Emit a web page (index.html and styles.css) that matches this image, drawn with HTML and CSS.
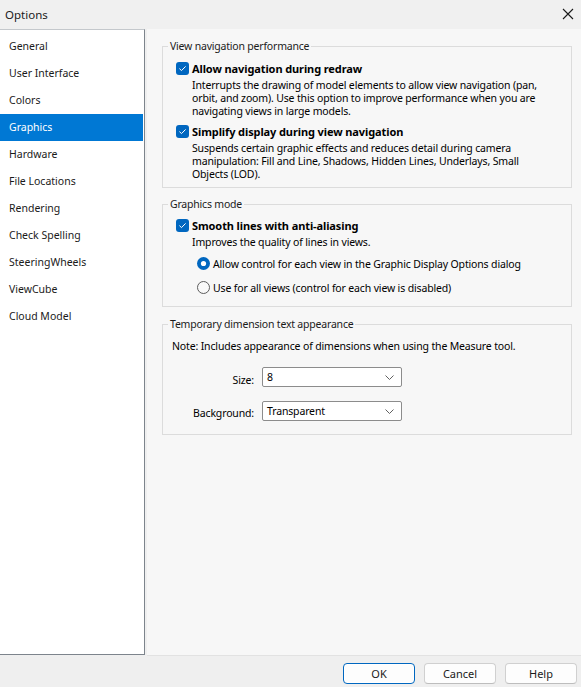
FILE: index.html
```html
<!DOCTYPE html>
<html>
<head>
<meta charset="utf-8">
<link rel="stylesheet" href="styles.css">
</head>
<body>
<div class="window">
  <div class="titlebar">
    <span class="title">Options</span>
    <svg class="close" width="12" height="12" viewBox="0 0 12 12"><path d="M1 1 L11 11 M11 1 L1 11" stroke="#1a1a1a" stroke-width="1.1" fill="none"/></svg>
  </div>
  <div class="main">
    <ul class="nav">
      <li>General</li>
      <li>User Interface</li>
      <li>Colors</li>
      <li class="active">Graphics</li>
      <li>Hardware</li>
      <li>File Locations</li>
      <li>Rendering</li>
      <li>Check Spelling</li>
      <li>SteeringWheels</li>
      <li>ViewCube</li>
      <li>Cloud Model</li>
    </ul>
    <div class="panel">
      <fieldset class="group g1">
        <legend>View navigation performance</legend>
        <div class="opts">
          <div class="check-row first">
            <svg class="cb" width="13" height="13" viewBox="0 0 13 13"><rect x="0" y="0" width="13" height="13" rx="3" fill="#0067c0"/><path d="M3.4 6.6 L5.5 8.6 L9.6 4.4" stroke="#fff" stroke-width="1" fill="none"/></svg>
            <span class="lbl">Allow navigation during redraw</span>
          </div>
          <p class="desc">Interrupts the drawing of model elements to allow view navigation (pan,<br>orbit, and zoom). Use this option to improve performance when you are<br>navigating views in large models.</p>
          <div class="check-row second">
            <svg class="cb" width="13" height="13" viewBox="0 0 13 13"><rect x="0" y="0" width="13" height="13" rx="3" fill="#0067c0"/><path d="M3.4 6.6 L5.5 8.6 L9.6 4.4" stroke="#fff" stroke-width="1" fill="none"/></svg>
            <span class="lbl">Simplify display during view navigation</span>
          </div>
          <p class="desc">Suspends certain graphic effects and reduces detail during camera<br>manipulation: Fill and Line, Shadows, Hidden Lines, Underlays, Small<br>Objects (LOD).</p>
        </div>
      </fieldset>

      <fieldset class="group g2">
        <legend>Graphics mode</legend>
        <div class="opts">
          <div class="check-row first">
            <svg class="cb" width="13" height="13" viewBox="0 0 13 13"><rect x="0" y="0" width="13" height="13" rx="3" fill="#0067c0"/><path d="M3.4 6.6 L5.5 8.6 L9.6 4.4" stroke="#fff" stroke-width="1" fill="none"/></svg>
            <span class="lbl">Smooth lines with anti-aliasing</span>
          </div>
          <p class="desc">Improves the quality of lines in views.</p>
          <div class="radio-row r1">
            <svg class="rb" width="13" height="13" viewBox="0 0 13 13"><circle cx="6.5" cy="6.5" r="6.5" fill="#0067c0"/><circle cx="6.5" cy="6.5" r="2.6" fill="#fff"/></svg>
            <span>Allow control for each view in the Graphic Display Options dialog</span>
          </div>
          <div class="radio-row r2">
            <svg class="rb" width="13" height="13" viewBox="0 0 13 13"><circle cx="6.5" cy="6.5" r="6" fill="#f9f9f9" stroke="#5c5c5c" stroke-width="1"/></svg>
            <span>Use for all views (control for each view is disabled)</span>
          </div>
        </div>
      </fieldset>

      <fieldset class="group g3">
        <legend>Temporary dimension text appearance</legend>
        <p class="note">Note: Includes appearance of dimensions when using the Measure tool.</p>
        <div class="form">
          <label class="flabel size">Size:</label>
          <div class="combo"><span>8</span><svg width="9" height="5" viewBox="0 0 9 5"><path d="M0.5 0.5 L4.5 4.5 L8.5 0.5" stroke="#606060" stroke-width="1" fill="none"/></svg></div>
          <label class="flabel">Background:</label>
          <div class="combo"><span>Transparent</span><svg width="9" height="5" viewBox="0 0 9 5"><path d="M0.5 0.5 L4.5 4.5 L8.5 0.5" stroke="#606060" stroke-width="1" fill="none"/></svg></div>
        </div>
      </fieldset>
    </div>
  </div>
  <div class="footer">
    <button class="btn primary">OK</button>
    <button class="btn">Cancel</button>
    <button class="btn">Help</button>
  </div>
</div>
</body>
</html>
```
FILE: styles.css
```css
* { box-sizing: border-box; }
html, body { margin: 0; padding: 0; }
body {
  width: 581px;
  height: 687px;
  overflow: hidden;
  font-family: "Segoe UI", "Noto Sans", sans-serif;
  font-size: 10.5px;
  letter-spacing: -0.15px;
  color: #000;
  background: #efefef;
}
.window {
  display: flex;
  flex-direction: column;
  width: 581px;
  height: 687px;
}
.titlebar {
  height: 29px;
  flex: none;
  display: flex;
  align-items: center;
  justify-content: space-between;
  background: #f0f0f0;
  padding: 0 7px 0 5px;
}
.title { font-size: 11.5px; letter-spacing: 0; color: #1a1a1a; }
.close { display: block; margin-top: -1px; }

.main {
  height: 627px;
  flex: none;
  display: flex;
  background: #efefef;
}
.nav {
  list-style: none;
  margin: 0;
  padding: 3px 1px 0 0;
  width: 145px;
  height: 626px;
  background: #fff;
  border-top: 1px solid #c4c8cc;
  border-right: 1px solid #7d848c;
  border-bottom: 1px solid #7d848c;
}
.nav li {
  height: 27px;
  line-height: 27px;
  padding-left: 9px;
  font-size: 10.5px;
  letter-spacing: 0;
  color: #1a1a1a;
}
.nav li.active {
  background: #0078d4;
  color: #fff;
}
.panel {
  flex: 1;
  margin-left: 2px;
  height: 627px;
  background: #f7f7f7;
  border-bottom: 1px solid #e2e2e2;
  padding: 11px 9px 0 15px;
}
.group {
  margin: 0;
  padding: 0;
  border: 1px solid #dcdcdc;
  min-width: 0;
}
.group legend {
  margin-left: 5px;
  padding: 0 2px;
  line-height: 13px;
  color: #1b1b1b;
  letter-spacing: -0.2px;
}
.g1 { padding-bottom: 6px; }
.g2 { margin-top: 10px; padding-bottom: 10px; }
.g3 { margin-top: 11px; padding-bottom: 13px; }

.opts { padding-left: 13px; }
.check-row {
  display: flex;
  align-items: center;
  height: 17px;
}
.check-row.first { margin-top: 7px; }
.check-row.second { margin-top: 5px; }
.g2 .check-row.first { margin-top: 6px; }
.cb { display: block; flex: none; margin-right: 3px; }
.lbl { font-weight: bold; font-size: 11px; letter-spacing: -0.1px; white-space: nowrap; }
.desc {
  margin: 2px 0 0 16px;
  line-height: 13px;
  white-space: nowrap;
}
.radio-row {
  display: flex;
  align-items: center;
  height: 17px;
  margin-left: 21px;
  white-space: nowrap;
}
.radio-row.r1 { margin-top: 6px; }
.radio-row.r2 { margin-top: 7px; }
.rb { display: block; flex: none; margin-right: 3px; }

.note {
  margin: 9px 0 0 9px;
  line-height: 13px;
  white-space: nowrap;
}
.form {
  display: grid;
  grid-template-columns: 82px 140px;
  column-gap: 8px;
  row-gap: 14px;
  margin: 14px 0 0 9px;
  align-items: center;
}
.flabel { text-align: right; padding-top: 3px; }
.flabel.size { padding-top: 5px; }
.combo {
  height: 20px;
  background: #fff;
  border: 1px solid #8c8c8c;
  border-radius: 2px;
  display: flex;
  align-items: center;
  justify-content: space-between;
  padding: 0 7px 0 4px;
}
.combo svg { display: block; }

.footer {
  height: 31px;
  flex: none;
  display: flex;
  justify-content: flex-end;
  gap: 9px;
  padding: 7px 4px 0 0;
  background: #efefef;
}
.btn {
  width: 72px;
  height: 21px;
  margin: 0;
  padding: 0;
  font-family: "Segoe UI", "Noto Sans", sans-serif;
  font-size: 11px;
  color: #1a1a1a;
  background: #fdfdfd;
  border: 1px solid #d0d0d0;
  border-bottom-color: #bdbdbd;
  border-radius: 4px;
}
.btn.primary {
  border: 1px solid #0067c0;
  box-shadow: inset 0 0 0 1px #ffffff;
  background: #fdfdfd;
}
```
